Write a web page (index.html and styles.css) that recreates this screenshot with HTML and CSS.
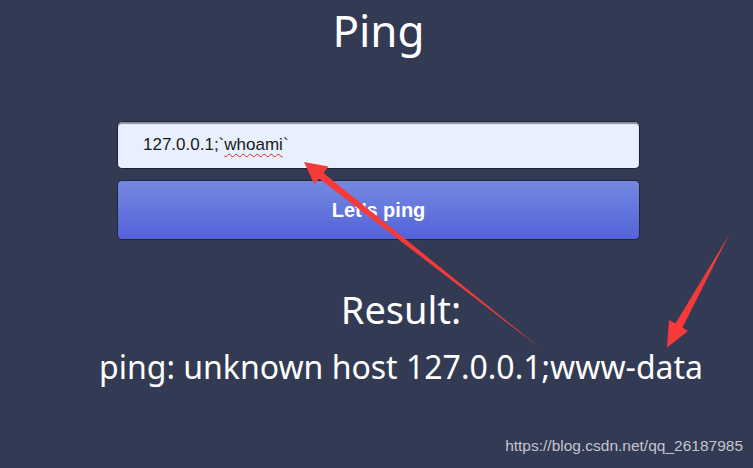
FILE: index.html
```html
<!DOCTYPE html>
<html lang="en">
<head>
<meta charset="utf-8">
<title>Ping</title>
<link rel="stylesheet" href="styles.css">
</head>
<body>
<main class="page">
  <h1 class="title">Ping</h1>
  <form class="ping-form">
    <div class="field">127.0.0.1;`<span class="misspelled">whoami</span>`</div>
    <button type="button" class="btn">Let's ping</button>
  </form>
  <section class="result">
    <h2 class="result-title">Result:</h2>
    <p class="result-text">ping: unknown host 127.0.0.1;www-data</p>
  </section>
</main>
<div class="watermark">https://blog.csdn.net/qq_26187985</div>
<svg class="arrows" width="753" height="468" viewBox="0 0 753 468" xmlns="http://www.w3.org/2000/svg">
  <polygon fill="#f63a3a" points="304,162 328.5,166.5 323.5,173 542,349.5 319,178.5 314.5,184.5"/>
  <polygon fill="#f63a3a" points="667,347.5 669,320 675.5,323.5 729.5,234 682.5,327.5 688,331"/>
</svg>
</body>
</html>
```
FILE: styles.css
```css
html, body {
  margin: 0;
  padding: 0;
}
body {
  background: #323a54;
  width: 753px;
  height: 468px;
  overflow: hidden;
  position: relative;
  font-family: "Noto Sans", "Open Sans", sans-serif;
  color: #ffffff;
}
.page {
  display: flex;
  flex-direction: column;
  align-items: flex-start;
  padding-left: 117px;
}
.title {
  margin: 4px 0 0 0;
  width: 523px;
  text-align: center;
  font-size: 44px;
  font-weight: 400;
  line-height: 52px;
}
.ping-form {
  margin: 65px 0 0 0;
  width: 523px;
  display: flex;
  flex-direction: column;
  gap: 11px;
}
.field {
  box-sizing: border-box;
  height: 48px;
  background: #e8f0fe;
  border: 1px solid #1e2233;
  border-radius: 5px;
  box-shadow: inset 0 2px 1px #8d8f99;
  padding: 12px 0 0 25px;
  font-family: "Liberation Sans", Arial, sans-serif;
  font-size: 17px;
  line-height: 22px;
  color: #1a1a1a;
}
.misspelled {
  text-decoration: underline wavy #e82020;
  text-decoration-thickness: 1px;
  text-underline-offset: 3px;
}
.btn {
  box-sizing: border-box;
  height: 60px;
  border: 1px solid #23263a;
  border-radius: 5px;
  background: linear-gradient(to bottom, #7489e2, #5363d8);
  color: #ffffff;
  font-family: "Liberation Sans", Arial, sans-serif;
  font-weight: 700;
  font-size: 20px;
  padding: 0;
  text-align: center;
  cursor: pointer;
}
.result {
  margin: 46px 0 0 0;
  width: 568px;
  display: flex;
  flex-direction: column;
  align-items: center;
}
.result-title {
  margin: 0;
  font-size: 38px;
  font-weight: 400;
  line-height: 46px;
}
.result-text {
  margin: 15px 0 0 0;
  font-size: 32px;
  line-height: 40px;
  white-space: nowrap;
}
.watermark {
  position: absolute;
  right: 10px;
  top: 437px;
  font-family: "Liberation Sans", Arial, sans-serif;
  font-size: 15.5px;
  color: #c3c6cf;
}
.arrows {
  position: absolute;
  left: 0;
  top: 0;
  pointer-events: none;
}
```
